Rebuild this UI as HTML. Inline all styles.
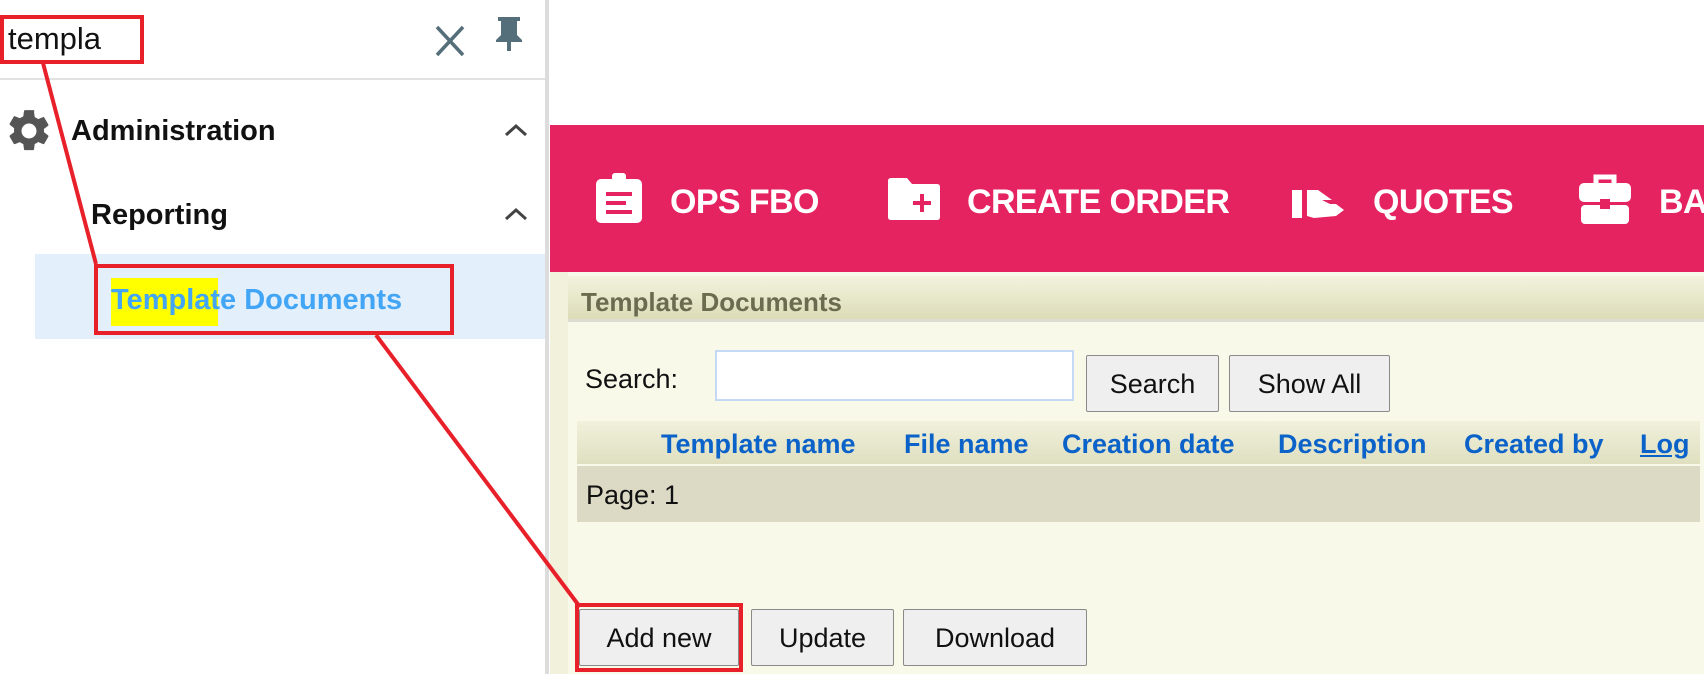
<!DOCTYPE html>
<html><head><meta charset="utf-8"><style>
*{margin:0;padding:0;box-sizing:border-box}
body{width:1704px;height:674px;position:relative;overflow:hidden;background:#fff;font-family:"Liberation Sans",sans-serif}
.a{position:absolute}
.rb{position:absolute;border:4px solid #e8202a}
.nav{font-family:"Liberation Sans Narrow","Liberation Sans",sans-serif;color:#fff;font-size:34px;font-weight:bold;top:183px;position:absolute;letter-spacing:-0.6px}
.hd{position:absolute;top:429px;color:#0b62c9;font-weight:bold;font-size:27px}
.btn{position:absolute;background:#efefef;border:1px solid #8a8a8a;border-radius:2px;font-size:27px;color:#111;text-align:center}
</style></head><body>
<!-- sidebar -->
<div class="a" style="left:545px;top:0;width:4px;height:674px;background:#dcdcdc"></div>
<div class="a" style="left:0;top:78px;width:545px;height:2px;background:#e2e2e2"></div>
<div class="a" style="left:8px;top:21px;font-size:31px;color:#111">templa</div>
<div class="rb" style="left:0;top:15px;width:144px;height:49px"></div>
<svg class="a" style="left:434px;top:24px" width="32" height="34" viewBox="0 0 32 34"><path d="M3 3L29 31M29 3L3 31" stroke="#546e7a" stroke-width="3.5"/></svg>
<svg class="a" style="left:494px;top:15px" width="30" height="36" viewBox="0 0 30 36"><path d="M4 2H26V6H23V20L28 25V27H17V36H13V27H2V25L7 20V6H4Z" fill="#546e7a"/></svg>
<svg class="a" style="left:4px;top:106px" width="50" height="50" viewBox="0 0 24 24"><path fill="#555" d="M19.14 12.94c.04-.3.06-.61.06-.94s-.02-.64-.07-.94l2.030-1.58a.49.49 0 00.12-.61l-1.92-3.32a.49.49 0 00-.59-.22l-2.39.96c-.5-.38-1.030-.7-1.62-.94l-.36-2.54A.48.48 0 0013.92 2h-3.84c-.24 0-.43.17-.47.41l-.36 2.54c-.59.24-1.13.57-1.62.94l-2.39-.96a.48.48 0 00-.59.22L2.73 8.47c-.12.21-.08.47.12.61l2.030 1.58c-.05.3-.07.63-.07.94s.02.64.07.94l-2.030 1.58a.49.49 0 00-.12.61l1.92 3.32c.12.22.37.29.59.22l2.39-.96c.5.38 1.030.7 1.62.94l.36 2.54c.05.24.24.41.48.41h3.84c.24 0 .44-.17.47-.41l.36-2.54c.59-.24 1.13-.56 1.62-.94l2.39.96c.22.08.47 0 .59-.22l1.92-3.32c.12-.22.07-.47-.12-.61l-2.010-1.58zM12 15.6A3.6 3.6 0 1112 8.4a3.6 3.6 0 010 7.2z"/></svg>
<div class="a" style="left:71px;top:115px;font-size:29px;font-weight:bold;color:#111">Administration</div>
<div class="a" style="left:91px;top:199px;font-size:29px;font-weight:bold;color:#111">Reporting</div>
<svg class="a" style="left:503px;top:122px" width="26" height="16" viewBox="0 0 26 16"><path d="M3 13L13 4L23 13" stroke="#444" stroke-width="3" fill="none"/></svg>
<svg class="a" style="left:503px;top:206px" width="26" height="16" viewBox="0 0 26 16"><path d="M3 13L13 4L23 13" stroke="#444" stroke-width="3" fill="none"/></svg>
<div class="a" style="left:35px;top:254px;width:510px;height:85px;background:#e3f0fb"></div>
<div class="a" style="left:111px;top:278px;width:107px;height:48px;background:#ffff00"></div>
<div class="a" style="left:111px;top:284px;font-size:29px;font-weight:bold;color:#42a5f5">Template Documents</div>
<div class="rb" style="left:94px;top:264px;width:360px;height:71px"></div>
<!-- pink bar -->
<div class="a" style="left:550px;top:125px;width:1154px;height:147px;background:#e52360"></div>
<svg class="a" style="left:594px;top:172px" width="50" height="52" viewBox="0 0 50 52"><rect x="2" y="7" width="46" height="44" rx="5" fill="#fff"/><rect x="18" y="1" width="14" height="10" rx="3" fill="#fff"/><rect x="12" y="20" width="26" height="4" fill="#e52360"/><rect x="12" y="29" width="20" height="4" fill="#e52360"/><rect x="12" y="38" width="26" height="4" fill="#e52360"/></svg>
<div class="nav" style="left:670px">OPS FBO</div>
<svg class="a" style="left:887px;top:177px" width="54" height="44" viewBox="0 0 54 44"><path d="M1 4Q1 1 4 1H20L25 7H50Q53 7 53 10V40Q53 43 50 43H4Q1 43 1 40Z" fill="#fff"/><path d="M35 17V35M26 26H44" stroke="#e52360" stroke-width="4"/></svg>
<div class="nav" style="left:967px">CREATE ORDER</div>
<svg class="a" style="left:1292px;top:188px" width="56" height="32" viewBox="0 0 56 32"><rect x="0" y="2" width="10" height="28" fill="#fff"/><path d="M15 2H26L40 12H30L38 16H44L52 22L44 28L22 30L15 28Z" fill="#fff"/></svg>
<div class="nav" style="left:1373px">QUOTES</div>
<svg class="a" style="left:1578px;top:173px" width="54" height="52" viewBox="0 0 54 52"><path d="M18 10V4H36V10" stroke="#fff" stroke-width="5" fill="none"/><rect x="1" y="10" width="52" height="19" rx="5" fill="#fff"/><rect x="3" y="32" width="48" height="19" rx="4" fill="#fff"/><rect x="22" y="26" width="10" height="10" fill="#e52360"/></svg>
<div class="nav" style="left:1659px">BA</div>
<!-- panel -->
<div class="a" style="left:550px;top:272px;width:1154px;height:402px;background:#f9f9ea;border-left:18px solid #f2f2dc"></div>
<div class="a" style="left:568px;top:276px;width:1136px;height:46px;background:linear-gradient(#f3f3de,#dcdcb8);border-bottom:3px solid #dcdcd0"></div>
<div class="a" style="left:581px;top:287px;font-size:26px;font-weight:bold;color:#6b6b4f">Template Documents</div>
<div class="a" style="left:585px;top:364px;font-size:27px;color:#111">Search:</div>
<div class="a" style="left:715px;top:350px;width:359px;height:51px;background:#fff;border:2px solid #c5d9f7"></div>
<div class="btn" style="left:1086px;top:355px;width:133px;height:57px;line-height:57px">Search</div>
<div class="btn" style="left:1229px;top:355px;width:161px;height:57px;line-height:57px">Show All</div>
<div class="a" style="left:577px;top:421px;width:1123px;height:43px;background:linear-gradient(#f1f1dc,#dfdfc0)"></div>
<div class="hd" style="left:661px">Template name</div>
<div class="hd" style="left:904px">File name</div>
<div class="hd" style="left:1062px">Creation date</div>
<div class="hd" style="left:1278px">Description</div>
<div class="hd" style="left:1464px">Created by</div>
<div class="hd" style="left:1640px;text-decoration:underline">Log</div>
<div class="a" style="left:577px;top:466px;width:1123px;height:56px;background:#dcdac4"></div>
<div class="a" style="left:586px;top:480px;font-size:27px;color:#111">Page: 1</div>
<div class="btn" style="left:579px;top:609px;width:160px;height:57px;line-height:57px">Add new</div>
<div class="btn" style="left:751px;top:609px;width:143px;height:57px;line-height:57px">Update</div>
<div class="btn" style="left:903px;top:609px;width:184px;height:57px;line-height:57px">Download</div>
<div class="rb" style="left:575px;top:603px;width:168px;height:69px"></div>
<svg class="a" style="left:0;top:0" width="1704" height="674"><path d="M43 63L96 264M376 335L580 607" stroke="#e8202a" stroke-width="4"/></svg>
</body></html>
